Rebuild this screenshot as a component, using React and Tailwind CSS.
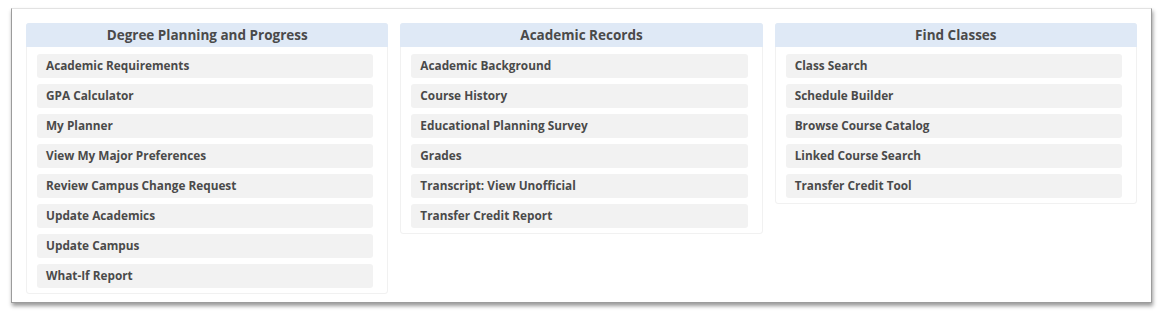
import React from "react";

const columns = [
  {
    title: "Degree Planning and Progress",
    items: [
      "Academic Requirements",
      "GPA Calculator",
      "My Planner",
      "View My Major Preferences",
      "Review Campus Change Request",
      "Update Academics",
      "Update Campus",
      "What-If Report",
    ],
  },
  {
    title: "Academic Records",
    items: [
      "Academic Background",
      "Course History",
      "Educational Planning Survey",
      "Grades",
      "Transcript: View Unofficial",
      "Transfer Credit Report",
    ],
  },
  {
    title: "Find Classes",
    items: [
      "Class Search",
      "Schedule Builder",
      "Browse Course Catalog",
      "Linked Course Search",
      "Transfer Credit Tool",
    ],
  },
];

export default function App() {
  return (
    <div
      className="w-[1163px] h-[319px] bg-white pt-[8px] pl-[11px]"
      style={{ fontFamily: '"Open Sans", "Noto Sans", sans-serif' }}
    >
      <div className="w-[1141px] h-[295px] bg-white border border-[#9c9c9c] border-t-[#e2e2e2] shadow-[1px_3px_4px_rgba(0,0,0,0.4)] px-[14px] pt-[14px] overflow-hidden">
        <div className="grid grid-cols-3 gap-3 items-start">
          {columns.map((col) => (
            <div
              key={col.title}
              className="border border-[#f1f1f1] rounded-[3px] pb-[5px]"
            >
              <div className="h-6 bg-[#dfe9f6] rounded-t-[3px] flex items-center justify-center text-[13.5px] font-bold text-[#4a4a4a] -mx-px -mt-px">
                {col.title}
              </div>
              <div className="flex flex-col gap-[6px] pt-[7px] pl-[10px] pr-[14px]">
                {col.items.map((it) => (
                  <div
                    key={it}
                    className="h-6 bg-[#f2f2f2] rounded-[3px] flex items-center pl-[9px] text-[11.8px] font-bold text-[#4a4a4a]"
                  >
                    {it}
                  </div>
                ))}
              </div>
            </div>
          ))}
        </div>
      </div>
    </div>
  );
}
